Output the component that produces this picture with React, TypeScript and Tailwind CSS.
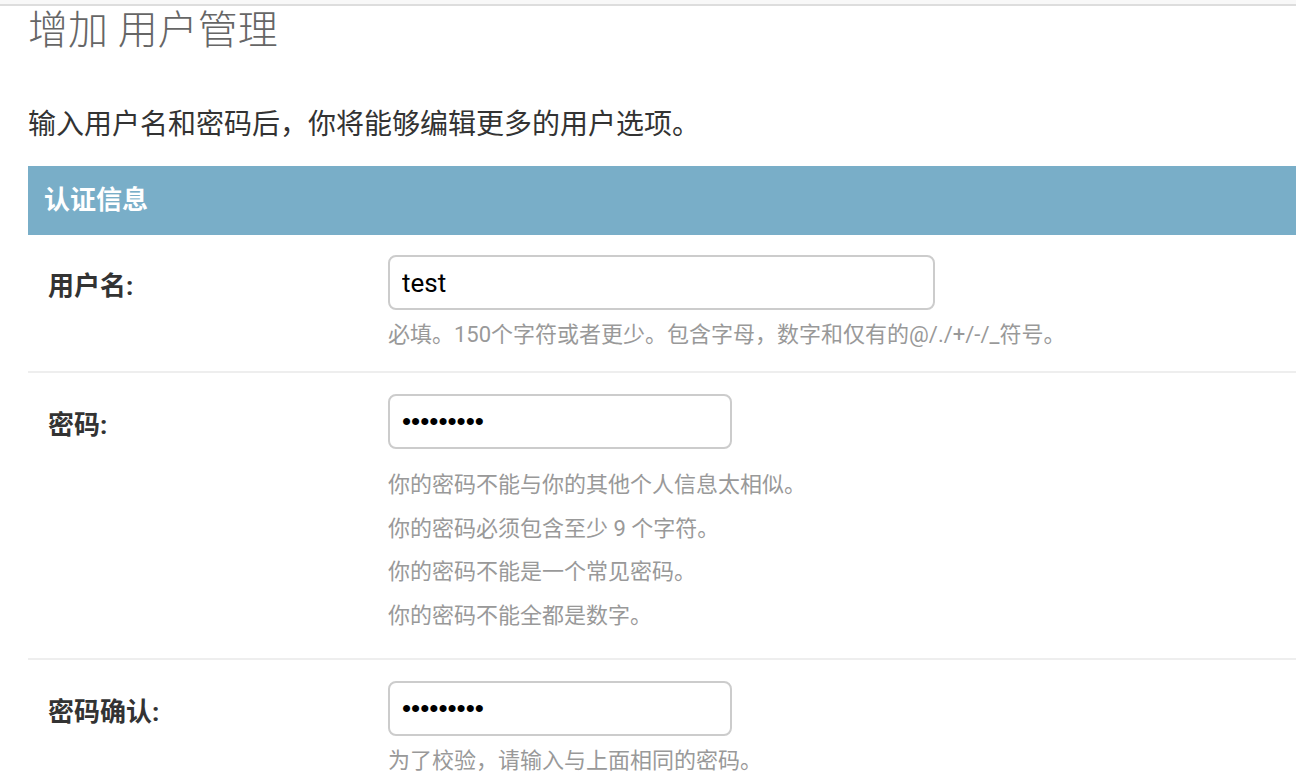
import React from 'react';

const FONT = "font-['Roboto','Noto_Sans_CJK_SC',sans-serif]";

interface FieldRowProps {
  label: string;
  value: string;
  secret?: boolean;
  inputWidth: string;
  pad: string;
  children: React.ReactNode;
}

const FieldRow: React.FC<FieldRowProps> = ({ label, value, secret, inputWidth, pad, children }) => (
  <div className={`flex pl-[20px] ${pad} border-b-2 border-[#eeeeee]`}>
    <div className="w-[340px] shrink-0 h-[55px] flex items-center pt-[6px]">
      <span className="text-[26px] font-bold text-[#333] leading-[32px]">{label}</span>
    </div>
    <div className="flex flex-col">
      <input
        readOnly
        type="text"
        value={value}
        className={
          secret
            ? `${inputWidth} h-[55px] border-2 border-[#cccccc] rounded-[8px] px-[12px] text-[26px] text-black outline-none font-['Liberation_Sans',sans-serif]`
            : `${inputWidth} h-[55px] border-2 border-[#cccccc] rounded-[8px] px-[12px] text-[26px] text-black outline-none`
        }
      />
      {children}
    </div>
  </div>
);

export default function App() {
  const dots = '•••••••••';
  return (
    <div className={`${FONT} bg-white min-h-screen overflow-hidden`}>
      <div className="h-[4px] bg-[#f8f8f8]" />
      <div className="h-[2px] bg-[#dddddd]" />

      <div className="pl-[28px]">
        <h1 className="mt-[5px] text-[40px] leading-[40px] font-light text-[#666]">增加 用户管理</h1>

        <p className="mt-[54px] text-[28px] leading-[40px] text-[#333]">
          输入用户名和密码后，你将能够编辑更多的用户选项。
        </p>

        <fieldset className="mt-[21px]">
          <h2 className="h-[69px] flex items-center pl-[16px] bg-[#79aec8] text-white text-[26px] font-bold">
            认证信息
          </h2>

          <FieldRow label="用户名:" value="test" inputWidth="w-[547px]" pad="pt-[20px] pb-[20px]">
            <div className="mt-[9px] text-[22px] leading-[32px] text-[#999] whitespace-nowrap">
              必填。150个字符或者更少。包含字母，数字和仅有的@/./+/-/_符号。
            </div>
          </FieldRow>

          <FieldRow label="密码:" value={dots} secret inputWidth="w-[344px]" pad="pt-[21px] pb-[21px]">
            <ul className="mt-[14px] text-[22px] leading-[43.5px] text-[#999] whitespace-nowrap">
              <li>你的密码不能与你的其他个人信息太相似。</li>
              <li>你的密码必须包含至少 9 个字符。</li>
              <li>你的密码不能是一个常见密码。</li>
              <li>你的密码不能全都是数字。</li>
            </ul>
          </FieldRow>

          <FieldRow label="密码确认:" value={dots} secret inputWidth="w-[344px]" pad="pt-[21px] pb-[20px]">
            <div className="mt-[9px] text-[22px] leading-[32px] text-[#999] whitespace-nowrap">
              为了校验，请输入与上面相同的密码。
            </div>
          </FieldRow>
        </fieldset>
      </div>
    </div>
  );
}
